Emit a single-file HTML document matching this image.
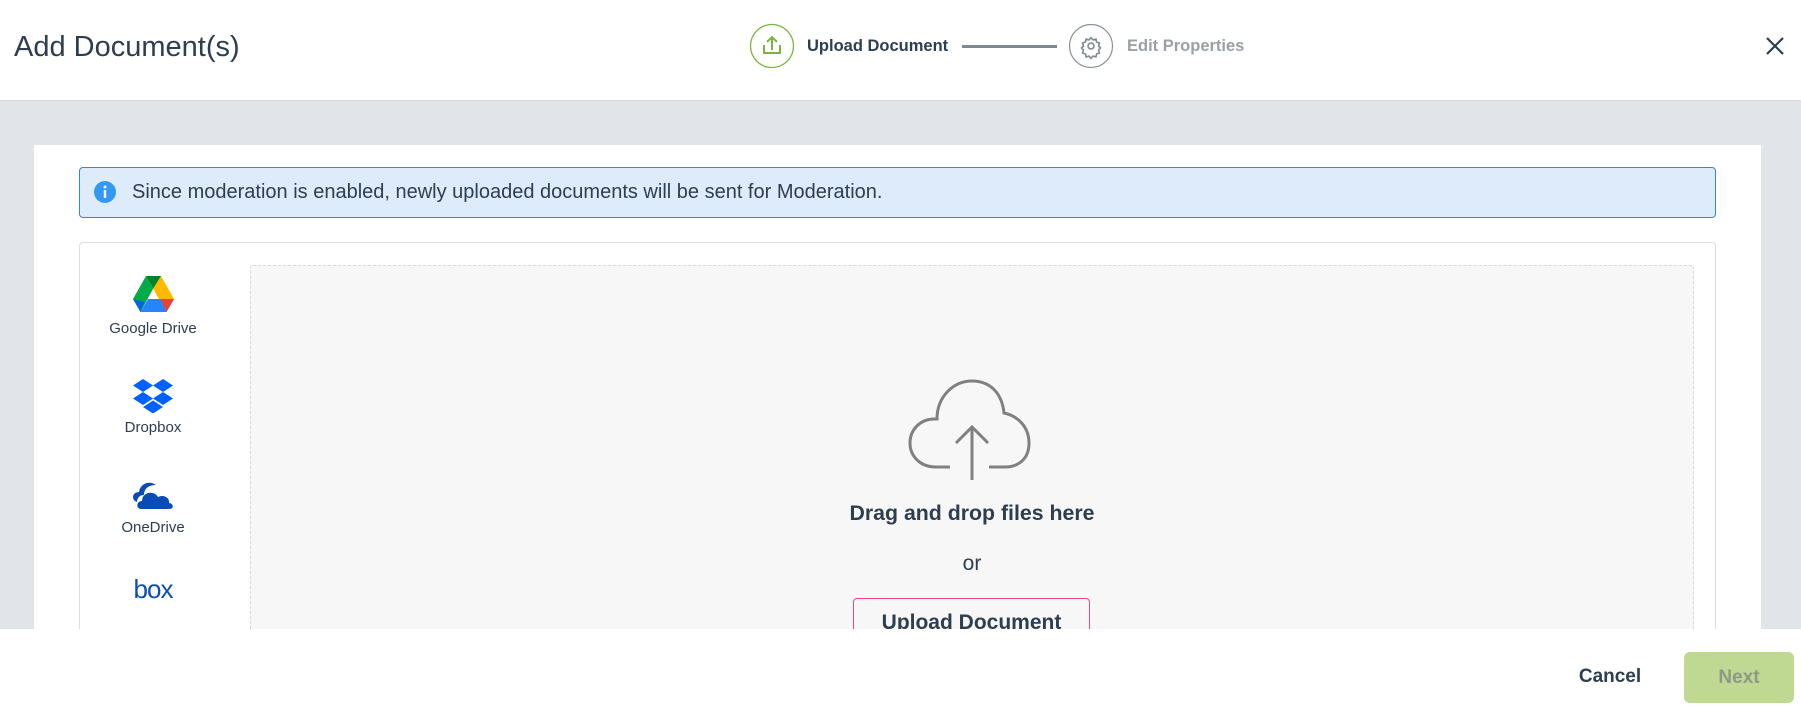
<!DOCTYPE html>
<html style="overflow:hidden;height:714px"><head><meta charset="utf-8"><style>
*{margin:0;padding:0;box-sizing:border-box}
body{width:1801px;height:714px;overflow:hidden;background:#e1e5ea;font-family:"Liberation Sans",sans-serif;color:#2d3e50;position:relative}
.abs{position:absolute}
</style></head><body>
<div class="abs" style="left:0;top:0;width:1801px;height:101px;background:#fff;border-bottom:1px solid #d8dce0"></div>
<div class="abs" style="left:14px;top:30px;font-size:29px;line-height:34px">Add Document(s)</div>
<svg class="abs" style="left:749px;top:23px" width="46" height="46" viewBox="0 0 46 46"><circle cx="23" cy="23" r="21.5" fill="none" stroke="#7cb342" stroke-width="1.3"/><path d="M15 22v8h16v-8" fill="none" stroke="#7cb342" stroke-width="2"/><path d="M23 27V14M18 19l5-5 5 5" fill="none" stroke="#7cb342" stroke-width="2"/></svg>
<div class="abs" style="left:807px;top:36px;font-size:16.5px;font-weight:bold;line-height:20px">Upload Document</div>
<div class="abs" style="left:962px;top:45px;width:95px;height:3px;background:#7f8a90"></div>
<svg class="abs" style="left:1068px;top:23px" width="46" height="46" viewBox="0 0 46 46"><circle cx="23" cy="23" r="21.5" fill="none" stroke="#8a9197" stroke-width="1.2"/><path d="M23 14.5l2 2.5 3-1 .5 3 3 1-1 3 2 2-2 2 1 3-3 1-.5 3-3-1-2 2.5-2-2.5-3 1-.5-3-3-1 1-3-2-2 2-2-1-3 3-1 .5-3 3 1z" fill="none" stroke="#7f8a90" stroke-width="1.6" stroke-linejoin="round"/><circle cx="23" cy="23" r="3" fill="none" stroke="#7f8a90" stroke-width="1.6"/></svg>
<div class="abs" style="left:1127px;top:36px;font-size:16.5px;font-weight:bold;line-height:20px;color:#9aa0a6">Edit Properties</div>
<svg class="abs" style="left:1765px;top:36px" width="20" height="20" viewBox="0 0 20 20"><path d="M2 2L18 18M18 2L2 18" stroke="#2d3e50" stroke-width="2.2"/></svg>

<div class="abs" style="left:34px;top:145px;width:1727px;height:569px;background:#fff"></div>
<div class="abs" style="left:79px;top:167px;width:1637px;height:51px;background:#deebfa;border:1px solid #2f86e8;border-radius:4px"></div>
<svg class="abs" style="left:94px;top:181px" width="22" height="22" viewBox="0 0 22 22"><circle cx="11" cy="11" r="11" fill="#3399f3"/><rect x="9.8" y="9" width="2.4" height="8" fill="#fff"/><circle cx="11" cy="6" r="1.5" fill="#fff"/></svg>
<div class="abs" style="left:132px;top:180px;font-size:20px;line-height:24px">Since moderation is enabled, newly uploaded documents will be sent for Moderation.</div>

<div class="abs" style="left:79px;top:242px;width:1637px;height:460px;border:1px solid #ddd;border-radius:4px"></div>
<svg class="abs" style="left:133px;top:276px" width="41" height="36" viewBox="0 0 41 36"><path d="M13 0h15l13 23h-15z" fill="#ffba00"/><path d="M13 0L0 23l7.5 13L20.5 12z" fill="#00ac47"/><path d="M7.5 36h26L41 23H15z" fill="#2684fc"/><path d="M13 0h15L20.5 12z" fill="#00832d"/><path d="M41 23l-7.5 13-6-13z" fill="#ea4335"/><path d="M0 23l7.5 13 4-10z" fill="#0066da"/></svg>
<div class="abs" style="left:93px;top:320px;width:120px;text-align:center;font-size:15px">Google Drive</div>
<svg class="abs" style="left:133px;top:379px" width="40" height="34" viewBox="0 0 40 34"><path d="M10 0l10 6.5-10 6.5L0 6.5zM30 0l10 6.5-10 6.5-10-6.5zM0 19.5L10 13l10 6.5-10 6.5zM30 13l10 6.5-10 6.5-10-6.5zM10 28l10-6.5 10 6.5-10 6.5z" fill="#0061fe"/></svg>
<div class="abs" style="left:93px;top:419px;width:120px;text-align:center;font-size:15px">Dropbox</div>
<svg class="abs" style="left:131px;top:480px" width="44" height="30" viewBox="0 0 44 30"><path d="M6 22c-6-2-5-10 2-10 1-8 10-12 17-7-9 0-12 5-12 10-5 0-7 4-7 7z" fill="#0a4cb5"/><path d="M10 29c-5 0-5-8 1-8 0-9 12-11 16-4 6-3 12 1 11 6 4 0 6 6 0 6z" fill="#0a4cb5"/></svg>
<div class="abs" style="left:93px;top:519px;width:120px;text-align:center;font-size:15px">OneDrive</div>
<div class="abs" style="left:93px;top:574px;width:120px;text-align:center;font-size:26px;color:#0b4fb4;letter-spacing:-1px">box</div>

<div class="abs" style="left:250px;top:265px;width:1444px;height:440px;background:#f7f7f7;border:1px dashed #d9d9d9;border-radius:3px"></div>
<svg class="abs" style="left:906px;top:377px" width="132" height="104" viewBox="0 0 132 104"><path d="M44 90H30C14 90 4 79 4 66c0-14 11-24 24-24h3c0-22 16-38 35-38 18 0 30 12 32 32 14 3 25 14 25 30 0 18-13 24-24 24H83" fill="none" stroke="#808080" stroke-width="3"/><path d="M66 103V50M50 66l16-16 16 16" fill="none" stroke="#808080" stroke-width="3"/></svg>
<div class="abs" style="left:650px;top:500px;width:644px;text-align:center;font-size:21.3px;font-weight:bold;line-height:26px">Drag and drop files here</div>
<div class="abs" style="left:650px;top:552px;width:644px;text-align:center;font-size:21px;line-height:24px">or</div>
<div class="abs" style="left:853px;top:598px;width:237px;height:60px;border:1px solid #f0457e;border-radius:4px;text-align:center;font-size:21px;font-weight:bold;line-height:48px;color:#2d3e50">Upload Document</div>

<div class="abs" style="left:0;top:629px;width:1801px;height:85px;background:#fff"></div>
<div class="abs" style="left:1570px;top:666px;width:80px;text-align:center;font-size:19px;font-weight:bold">Cancel</div>
<div class="abs" style="left:1684px;top:652px;width:110px;height:51px;background:#bfd892;border-radius:6px;text-align:center;font-size:19px;font-weight:bold;line-height:51px;color:#8c9a86">Next</div>
</body></html>
